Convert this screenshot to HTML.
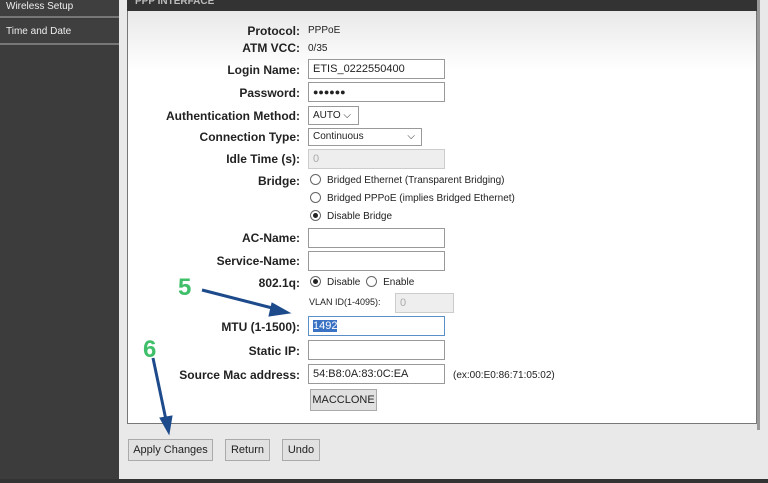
<!DOCTYPE html>
<html><head><style>
*{margin:0;padding:0;box-sizing:border-box}
body{width:768px;height:483px;overflow:hidden;background:#e9e9e9;position:relative;font-family:"Liberation Sans",sans-serif;font-size:11px;color:#222}
.a{position:absolute}
.side{left:0;top:0;width:119px;height:479px;background:#3b3c3b}
.nav{left:0;width:119px;color:#eee;font-size:10px;padding-left:6px;border-bottom:2px solid #777;background:#3e3f3e}
.panel{left:127px;top:0;width:630px;height:424px;background:linear-gradient(#e4e4e4,#fff 70px);border:1px solid #777;border-top:none}
.hdr{left:127px;top:0;width:630px;height:11px;background:#333;color:#bbb;font-weight:bold;font-size:10px;padding-left:8px;line-height:4px;overflow:hidden}
.lbl{right:468px;font-weight:bold;font-size:12px;text-align:right;white-space:nowrap;font-family:"Liberation Sans",sans-serif}
.v{left:308px;font-size:10px;white-space:nowrap}
.inp{position:absolute;border:1px solid #999;background:#fff;font-size:11px;padding-left:4px;line-height:18px;height:20px}
.dis{background:#eee;color:#aaa;border-color:#ccc}
.r{display:inline-block;width:11px;height:11px;border:1px solid #666;border-radius:50%;vertical-align:-2px;margin-right:6px;position:relative;background:#fff}
.r.on::after{content:"";position:absolute;left:2px;top:2px;width:5px;height:5px;border-radius:50%;background:#222}
.btn{position:absolute;background:#e1e1e1;border:1px solid #aaa;font-size:11px;text-align:center;line-height:20px;height:22px}
</style></head><body>
<div class="a side"></div>
<div class="a nav" style="top:0;height:18px;line-height:14px">Wireless Setup</div>
<div class="a nav" style="top:20px;height:25px;line-height:24px">Time and Date</div>
<div class="a panel"></div>
<div class="a hdr">PPP INTERFACE</div>
<div class="a" style="left:757px;top:0;width:3px;height:430px;background:#999"></div>

<div class="a lbl" style="top:24px">Protocol:</div><div class="a v" style="top:25px">PPPoE</div>
<div class="a lbl" style="top:41px">ATM VCC:</div><div class="a v" style="top:43px">0/35</div>
<div class="a lbl" style="top:63px">Login Name:</div><div class="inp" style="left:308px;top:59px;width:137px">ETIS_0222550400</div>
<div class="a lbl" style="top:86px">Password:</div><div class="inp" style="left:308px;top:82px;width:137px;font-weight:bold;font-size:9px">●●●●●●</div>
<div class="a lbl" style="top:109px">Authentication Method:</div><div class="inp" style="left:308px;top:106px;width:51px;height:19px;line-height:17px;font-size:10px">AUTO ⌵</div>
<div class="a lbl" style="top:130px">Connection Type:</div><div class="inp" style="left:308px;top:128px;width:114px;height:18px;line-height:16px;font-size:10px">Continuous<span style="position:absolute;right:6px">⌵</span></div>
<div class="a lbl" style="top:152px">Idle Time (s):</div><div class="inp dis" style="left:308px;top:149px;width:137px">0</div>
<div class="a lbl" style="top:174px">Bridge:</div>
<div class="a v" style="top:174px;left:310px"><span class="r"></span>Bridged Ethernet (Transparent Bridging)</div>
<div class="a v" style="top:192px;left:310px"><span class="r"></span>Bridged PPPoE (implies Bridged Ethernet)</div>
<div class="a v" style="top:210px;left:310px"><span class="r on"></span>Disable Bridge</div>
<div class="a lbl" style="top:231px">AC-Name:</div><div class="inp" style="left:308px;top:228px;width:137px"></div>
<div class="a lbl" style="top:254px">Service-Name:</div><div class="inp" style="left:308px;top:251px;width:137px"></div>
<div class="a lbl" style="top:276px">802.1q:</div>
<div class="a v" style="top:276px;left:310px"><span class="r on"></span>Disable <span class="r" style="margin-left:3px"></span>Enable</div>
<div class="a v" style="top:297px;left:309px;font-size:9px">VLAN ID(1-4095):</div><div class="inp dis" style="left:395px;top:293px;width:59px">0</div>
<div class="a lbl" style="top:320px">MTU (1-1500):</div><div class="inp" style="left:308px;top:316px;width:137px;border:1px solid #5a8fc8"><span style="background:#3a72c4;color:#fff">1492</span></div>
<div class="a lbl" style="top:344px">Static IP:</div><div class="inp" style="left:308px;top:340px;width:137px"></div>
<div class="a lbl" style="top:368px">Source Mac address:</div><div class="inp" style="left:308px;top:364px;width:137px">54:B8:0A:83:0C:EA</div>
<div class="a v" style="top:370px;left:453px">(ex:00:E0:86:71:05:02)</div>
<div class="btn" style="left:310px;top:389px;width:67px">MACCLONE</div>

<div class="btn" style="left:128px;top:439px;width:85px">Apply Changes</div>
<div class="btn" style="left:225px;top:439px;width:45px">Return</div>
<div class="btn" style="left:282px;top:439px;width:38px">Undo</div>
<div class="a" style="left:0;top:479px;width:768px;height:4px;background:#333"></div>

<svg class="a" style="left:0;top:0" width="768" height="483">
<text x="178" y="295" font-family="Liberation Sans" font-weight="bold" font-size="24" fill="#3fbf6a">5</text>
<text x="143" y="357" font-family="Liberation Sans" font-weight="bold" font-size="24" fill="#3fbf6a">6</text>
<g stroke="#1d4a8a" stroke-width="3" fill="#1d4a8a">
<line x1="202" y1="290" x2="280" y2="310"/>
<polygon points="290,313 272,303 269,316" stroke-width="1"/>
<line x1="153" y1="358" x2="166" y2="420"/>
<polygon points="169,434 160,418 172,416" stroke-width="1"/>
</g>
</svg>
</body></html>
